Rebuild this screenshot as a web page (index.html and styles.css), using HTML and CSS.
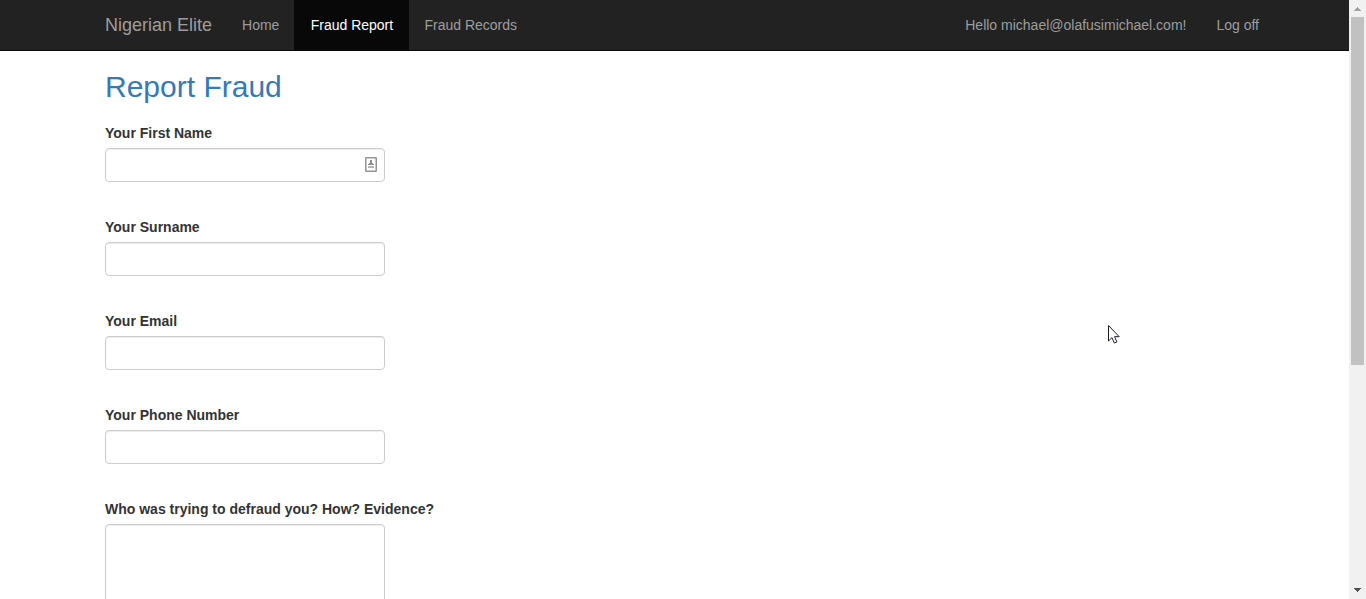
FILE: index.html
```html
<!DOCTYPE html>
<html lang="en">
<head>
<meta charset="utf-8">
<title>Report Fraud - Nigerian Elite</title>
<link rel="stylesheet" href="styles.css">
</head>
<body>
<div class="viewport">
  <div class="page">
    <header class="navbar">
      <nav class="container nav-row">
        <a class="brand" href="#">Nigerian Elite</a>
        <a class="nav-link" href="#">Home</a>
        <a class="nav-link active" href="#">Fraud Report</a>
        <a class="nav-link" href="#">Fraud Records</a>
        <div class="nav-right">
          <a class="nav-link" href="#">Hello michael@olafusimichael.com!</a>
          <a class="nav-link" href="#">Log off</a>
        </div>
      </nav>
    </header>
    <main class="container">
      <h2 class="title">Report Fraud</h2>
      <form class="form">
        <div class="field">
          <label for="first">Your First Name</label>
          <div class="control">
            <input id="first" type="text">
            <svg class="autofill" width="12" height="15" viewBox="0 0 12 15" aria-hidden="true">
              <rect x="0.75" y="0.75" width="10.500" height="13.500" rx="0.500" fill="#fff" stroke="#949494" stroke-width="1.500"/>
              <path d="M5 3h2v3h1v1h1v1H3V7h1V6h1z" fill="#8f8f8f"/>
              <path d="M3 9h6v2H3z" fill="#b5b5b5"/>
            </svg>
          </div>
        </div>
        <div class="field">
          <label for="surname">Your Surname</label>
          <input id="surname" type="text">
        </div>
        <div class="field">
          <label for="email">Your Email</label>
          <input id="email" type="email">
        </div>
        <div class="field">
          <label for="phone">Your Phone Number</label>
          <input id="phone" type="tel">
        </div>
        <div class="field">
          <label for="details">Who was trying to defraud you? How? Evidence?</label>
          <textarea id="details" rows="10"></textarea>
        </div>
      </form>
    </main>
  </div>
  <div class="scrollbar" aria-hidden="true">
    <svg class="arrow" width="17" height="17" viewBox="0 0 17 17" shape-rendering="crispEdges"><path d="M8 7h1v1h1v1h1v1h1v1H5v-1h1V9h1V8h1z" fill="#a3a3a3"/></svg>
    <div class="track"><div class="thumb"></div></div>
    <svg class="arrow" width="17" height="17" viewBox="0 0 17 17" shape-rendering="crispEdges"><path d="M5 6h7v1h-1v1h-1v1H9v1H8V9H7V8H6V7H5z" fill="#505050"/></svg>
  </div>
</div>
<svg class="cursor" width="14" height="21" viewBox="0 0 14 21" aria-hidden="true"><path d="M1.500 1.500v15.500l3.500-3.400 2.300 5.400 2.600-1.100-2.300-5.200h4.600z" fill="#fff" stroke="#1b1b2b"/></svg>
</body>
</html>
```
FILE: styles.css
```css
* { box-sizing: border-box; }
body {
  margin: 0;
  font-family: "Liberation Sans", Arial, sans-serif;
  font-size: 14px;
  line-height: 20px;
  color: #333;
  background: #fff;
}
.viewport { display: flex; height: 100vh; overflow: hidden; }
.page { flex: 1; min-width: 0; overflow: hidden; }
.container { max-width: 1169px; margin: 0 auto; padding: 0 15px; }
.navbar { background: #222; border-bottom: 1px solid #080808; }
.nav-row { display: flex; }
.brand, .nav-link { padding: 15px; color: #9d9d9d; text-decoration: none; white-space: nowrap; }
.brand { padding-left: 0; font-size: 18px; }
.nav-link.active { min-width: 115px; text-align: center; background: #080808; color: #fff; }
.nav-right { display: flex; margin-left: auto; margin-right: -30px; }
.title { margin: 20px 0; font-size: 30px; line-height: 32px; font-weight: 500; color: #337ab7; }
.form { display: flex; flex-direction: column; gap: 35px; }
.field { display: flex; flex-direction: column; align-items: flex-start; gap: 5px; }
label { font-weight: 700; }
.control { position: relative; width: 280px; }
input, textarea {
  display: block;
  width: 280px;
  height: 34px;
  padding: 6px 12px;
  border: 1px solid #ccc;
  border-radius: 4px;
  background: #fff;
  box-shadow: inset 0 1px 1px rgba(0, 0, 0, .075);
  font: inherit;
  color: #555;
}
textarea { height: auto; resize: none; }
.autofill { position: absolute; right: 8px; top: 9px; }
.scrollbar { display: flex; flex-direction: column; width: 17px; background: #f1f1f1; }
.arrow { display: block; }
.track { flex: 1; padding: 0 2px; }
.thumb { height: 61.6%; background: #c1c1c1; }
.cursor { position: absolute; left: 1107px; top: 324px; }
```
